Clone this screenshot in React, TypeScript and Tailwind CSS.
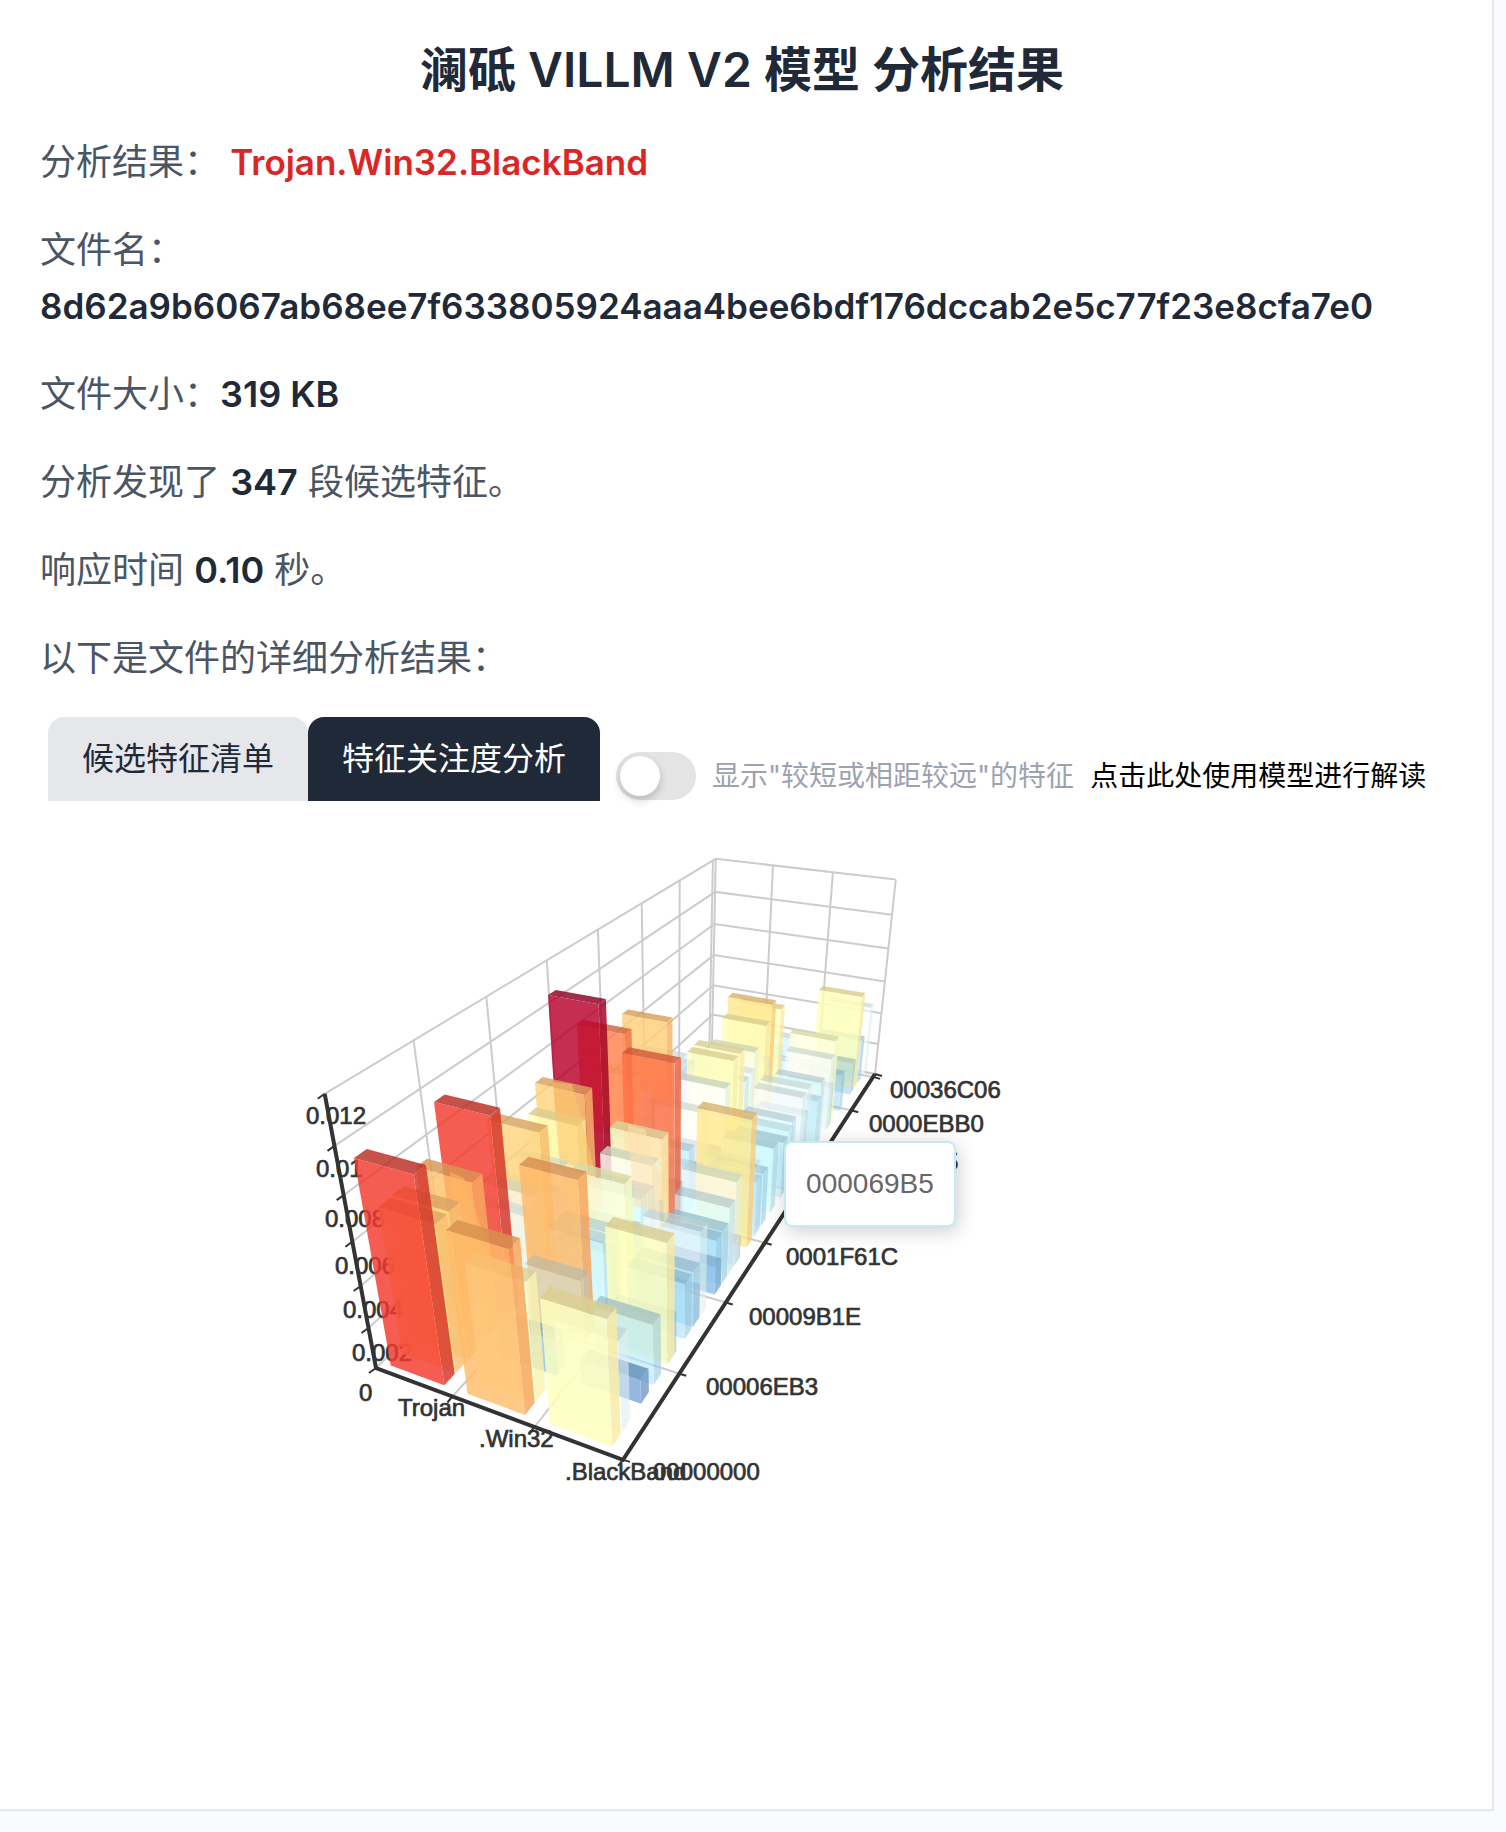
import React, { useState } from "react";

type Point = [number, number];

// Column index (0 = Trojan, 1 = .Win32, 2 = .BlackBand) and the front top-left corner of the bar
type Anchor = [number, number, number];

interface Shape {
  depth: number;
  opacity: number;
  faces: { points: string; fill: string }[];
}

const PALETTE = [
  [49, 54, 149],
  [69, 117, 180],
  [116, 173, 209],
  [171, 217, 233],
  [224, 243, 248],
  [255, 255, 191],
  [254, 224, 144],
  [253, 174, 97],
  [244, 109, 67],
  [215, 48, 39],
  [165, 0, 38],
];

// Perspective camera, rows for x, y and w over (column, depth, value)
const CAM_X = [182.3, 817.2, -99, 376];
const CAM_Y = [-59.6, 379.9, -435, 1368];
const CAM_W = [-0.1038, 0.6758, -0.147, 1];

const BAR_WIDTH = 0.235;
const BAR_THICKNESS = 0.02;
const MAX_VALUE = 0.88;
const DEPTH_TICKS = [0.141, 0.282, 0.423, 0.564, 0.705, 0.846, 0.987];

const ANCHORS: Anchor[] = [
  [0, 354, 1158],
  [0, 378, 1207],
  [0, 392, 1195],
  [0, 416, 1167],
  [0, 434, 1102],
  [0, 487, 1120],
  [0, 481, 1182],
  [0, 512, 1156],
  [0, 528, 1114],
  [0, 535, 1083],
  [0, 548, 995],
  [0, 577, 1025],
  [0, 588, 1068],
  [0, 600, 1080],
  [0, 622, 1014],
  [0, 640, 1050],
  [1, 446, 1230],
  [1, 465, 1263],
  [1, 497, 1322],
  [1, 519, 1165],
  [1, 548, 1228],
  [1, 557, 1219],
  [1, 570, 1170],
  [1, 588, 1186],
  [1, 596, 1180],
  [1, 600, 1153],
  [1, 610, 1127],
  [1, 622, 1053],
  [1, 640, 1140],
  [1, 655, 1103],
  [1, 679, 1079],
  [1, 687, 1052],
  [1, 694, 1045],
  [1, 700, 1073],
  [1, 710, 1044],
  [1, 722, 1018],
  [1, 728, 997],
  [1, 738, 1002],
  [2, 540, 1298],
  [2, 554, 1320],
  [2, 580, 1360],
  [2, 592, 1306],
  [2, 605, 1226],
  [2, 627, 1267],
  [2, 636, 1256],
  [2, 643, 1216],
  [2, 661, 1226],
  [2, 668, 1217],
  [2, 675, 1194],
  [2, 682, 1169],
  [2, 697, 1108],
  [2, 705, 1170],
  [2, 712, 1162],
  [2, 723, 1137],
  [2, 734, 1132],
  [2, 743, 1112],
  [2, 754, 1088],
  [2, 760, 1080],
  [2, 775, 1074],
  [2, 786, 1051],
  [2, 790, 1033],
  [2, 819, 990],
  [2, 820, 1033],
  [2, 829, 1001],
];

// Slices where a translucent bar shows through a taller one
const SLICES: Shape[] = [
  { depth: 0.3, opacity: 0.55, faces: [{ points: "553,1082 572,1084 594,1168 560,1164", fill: "#fbc66a" }] },
  { depth: 0.09, opacity: 0.6, faces: [{ points: "450,1172 464,1178 500,1280 460,1270", fill: "#fdb863" }] },
  { depth: 0.24, opacity: 0.55, faces: [{ points: "628,1125 645,1129 667,1203 667,1214 634,1206", fill: "#fde0b0" }] },
];

const LABELS: [string, number, number][] = [
  ["0.012", 306, 1124],
  ["0.01", 316, 1177],
  ["0.008", 325, 1227],
  ["0.006", 335, 1274],
  ["0.004", 343, 1318],
  ["0.002", 352, 1361],
  ["0", 359, 1401],
  ["Trojan", 398, 1416],
  [".Win32", 479, 1447],
  [".BlackBand", 565, 1480],
  ["00000000", 653, 1480],
  ["00006EB3", 706, 1395],
  ["00009B1E", 749, 1325],
  ["0001F61C", 786, 1265],
  ["000069B5", 849, 1170],
  ["0000EBB0", 869, 1132],
  ["00036C06", 890, 1098],
];

const project = (u: number, v: number, t: number): Point => {
  const w = CAM_W[0] * u + CAM_W[1] * v + CAM_W[2] * t + CAM_W[3];
  return [
    (CAM_X[0] * u + CAM_X[1] * v + CAM_X[2] * t + CAM_X[3]) / w,
    (CAM_Y[0] * u + CAM_Y[1] * v + CAM_Y[2] * t + CAM_Y[3]) / w,
  ];
};

// Recover depth and value of a bar from its column and corner
const unproject = (u: number, x: number, y: number) => {
  const a1 = CAM_X[1] - x * CAM_W[1];
  const b1 = CAM_X[2] - x * CAM_W[2];
  const c1 = x * (CAM_W[0] * u + CAM_W[3]) - CAM_X[0] * u - CAM_X[3];
  const a2 = CAM_Y[1] - y * CAM_W[1];
  const b2 = CAM_Y[2] - y * CAM_W[2];
  const c2 = y * (CAM_W[0] * u + CAM_W[3]) - CAM_Y[0] * u - CAM_Y[3];
  const det = a1 * b2 - a2 * b1;
  return { depth: (c1 * b2 - c2 * b1) / det, value: (a1 * c2 - a2 * c1) / det };
};

const toPoints = (points: Point[]) => points.map(([x, y]) => `${x.toFixed(1)},${y.toFixed(1)}`).join(" ");

const colorOf = (value: number) => {
  const pos = Math.min(Math.max(value / MAX_VALUE, 0), 1) * (PALETTE.length - 1);
  const i = Math.min(Math.floor(pos), PALETTE.length - 2);
  return PALETTE[i].map((c, k) => c + (PALETTE[i + 1][k] - c) * (pos - i));
};

const shade = (rgb: number[], factor: number) =>
  `rgb(${rgb.map((c) => Math.min(255, Math.round(c * factor))).join(",")})`;

const makeBar = (u: number, depth: number, value: number, opacity: number): Shape => {
  const right = u + BAR_WIDTH;
  const back = depth + BAR_THICKNESS;
  const rgb = colorOf(value);
  const side = [project(right, depth, 0), project(right, depth, value), project(right, back, value), project(right, back, 0)];
  const front = [project(u, depth, 0), project(u, depth, value), project(right, depth, value), project(right, depth, 0)];
  const top = [project(u, depth, value), project(u, back, value), project(right, back, value), project(right, depth, value)];
  return {
    depth,
    opacity,
    faces: [
      { points: toPoints(side), fill: shade(rgb, 0.98) },
      { points: toPoints(front), fill: shade(rgb, 1.12) },
      { points: toPoints(top), fill: shade(rgb, 0.86) },
    ],
  };
};

const columnStart = (col: number) => col / 3 + 0.04;

const tallBars = ANCHORS.map(([col, x, y]) => {
  const u = columnStart(col);
  const { depth, value } = unproject(u, x, y);
  return makeBar(u, depth, value, value > 0.38 ? 0.82 : 0.6);
});

// Low-attention segments between the tall ones
const lowBars = Array.from({ length: 36 }, (_, i) => {
  const col = i % 3;
  const depth = 0.13 + Math.floor(i / 3) * 0.068 + col * 0.012;
  const value = 0.1 + ((i * 7) % 11) * 0.022;
  return makeBar(columnStart(col), depth, value, 0.4);
});

const shapes = [...tallBars, ...lowBars, ...SLICES].sort((a, b) => b.depth - a.depth);

const gridLines: Point[][] = [
  ...[0, 1, 2, 3, 4, 5, 6].map((n) => [project(0, 0, n / 6), project(0, 1, n / 6), project(1, 1, n / 6)]),
  ...[...DEPTH_TICKS, 1].map((v) => [project(0, v, 1), project(0, v, 0), project(1, v, 0)]),
  ...[1 / 3, 2 / 3, 1].map((u) => [project(u, 1, 1), project(u, 1, 0), project(u, 0, 0)]),
];

const ticks: Point[][] = [
  ...[0, 1, 2, 3, 4, 5, 6].map((n) => {
    const [x, y] = project(0, 0, n / 6);
    return [[x, y], [x - 7, y + 5]] as Point[];
  }),
  ...[1 / 3, 2 / 3, 1].map((u) => {
    const [x, y] = project(u, 0, 0);
    return [[x, y], [x - 5, y + 6]] as Point[];
  }),
  ...[0, ...DEPTH_TICKS, 1].map((v) => {
    const [x, y] = project(1, v, 0);
    return [[x, y], [x + 7, y + 2]] as Point[];
  }),
];

const AttentionChart: React.FC = () => (
  <div className="relative">
    <svg viewBox="40 801 1404 988" className="block h-auto w-full" role="img" aria-label="特征关注度分析">
      <g fill="none" stroke="#cccccc" strokeWidth={2}>
        {gridLines.map((line, i) => (
          <polyline key={i} points={toPoints(line)} />
        ))}
      </g>
      <g fill="none" stroke="#333333" strokeWidth={2}>
        {ticks.map((line, i) => (
          <polyline key={i} points={toPoints(line)} />
        ))}
        <polyline
          points={toPoints([project(0, 0, 1), project(0, 0, 0), project(1, 0, 0), project(1, 1, 0)])}
          strokeWidth={4}
        />
      </g>
      <g fill="#333333" stroke="#333333" strokeWidth={0.7} fontSize={24} className="font-['Liberation_Sans',sans-serif]">
        {LABELS.map(([text, x, y]) => (
          <text key={`${text}-${x}`} x={x} y={y}>
            {text}
          </text>
        ))}
      </g>
      {shapes.map((shape, i) => (
        <g key={i} opacity={shape.opacity}>
          {shape.faces.map((face, k) => (
            <polygon key={k} points={face.points} fill={face.fill} />
          ))}
        </g>
      ))}
    </svg>
    <div className="absolute top-[34.4%] left-[53%] rounded-lg border-2 border-[#c8e8f4] bg-white p-5 font-['Liberation_Sans',sans-serif] text-[28px] leading-[42px] text-[#666666] shadow-[2px_4px_20px_rgba(0,0,0,0.2)]">
      000069B5
    </div>
  </div>
);

export default function App() {
  const [tab, setTab] = useState<"list" | "attention">("attention");
  const [showShort, setShowShort] = useState(false);

  const tabClass = (active: boolean) =>
    active
      ? "rounded-t-2xl bg-[#1f2937] px-[34px] py-4 text-white"
      : "rounded-t-2xl bg-[#e5e7eb] px-[34px] py-4 text-[#1f2937]";

  return (
    <div className="min-h-screen bg-[#fafbfd] pr-3 font-['Inter','Noto_Sans_CJK_SC',sans-serif]">
      <main className="border-r-2 border-b-2 border-[#e5e7eb] bg-white pt-[42px] pr-12 pb-5 pl-10">
        <h1 className="mb-9 text-center text-[48px] leading-[56px] font-semibold text-[#1f2937]">
          澜砥 VILLM V2 模型 分析结果
        </h1>

        {/* Summary */}
        <div className="space-y-8 text-[36px] leading-[56px] text-[#4b5563]">
          <p>
            分析结果： <span className="text-[35px] font-semibold text-[#dc2626]">Trojan.Win32.BlackBand</span>
          </p>
          <p>
            文件名：
            <br />
            <span className="text-[35px] font-semibold text-[#1f2937]">
              8d62a9b6067ab68ee7f633805924aaa4bee6bdf176dccab2e5c77f23e8cfa7e0
            </span>
          </p>
          <p>
            文件大小：<span className="font-semibold text-[#1f2937]">319 KB</span>
          </p>
          <p>
            分析发现了 <span className="font-semibold text-[#1f2937]">347</span> 段候选特征。
          </p>
          <p>
            响应时间 <span className="font-semibold text-[#1f2937]">0.10</span> 秒。
          </p>
          <p>以下是文件的详细分析结果：</p>
        </div>

        {/* Tabs */}
        <div className="mt-[31px] ml-2 flex items-end">
          <div className="flex text-[32px] leading-[52px]">
            <button type="button" className={tabClass(tab === "list")} onClick={() => setTab("list")}>
              候选特征清单
            </button>
            <button type="button" className={tabClass(tab === "attention")} onClick={() => setTab("attention")}>
              特征关注度分析
            </button>
          </div>
          <label className="ml-4 flex h-[50px] items-center gap-4 text-[28px] whitespace-nowrap text-[#9ca3af]">
            <input
              type="checkbox"
              role="switch"
              checked={showShort}
              onChange={(e) => setShowShort(e.target.checked)}
              className="h-12 w-20 appearance-none rounded-full bg-[#e4e4e4] p-1 before:block before:size-10 before:rounded-full before:bg-white before:shadow-[0_4px_8px_rgba(0,0,0,0.2)] checked:bg-[#1f2937] checked:before:translate-x-8"
            />
            显示"较短或相距较远"的特征
          </label>
          <a href="#explain" className="ml-4 text-[28px] leading-[50px] whitespace-nowrap text-black">
            点击此处使用模型进行解读
          </a>
        </div>

        <AttentionChart />
      </main>
    </div>
  );
}
